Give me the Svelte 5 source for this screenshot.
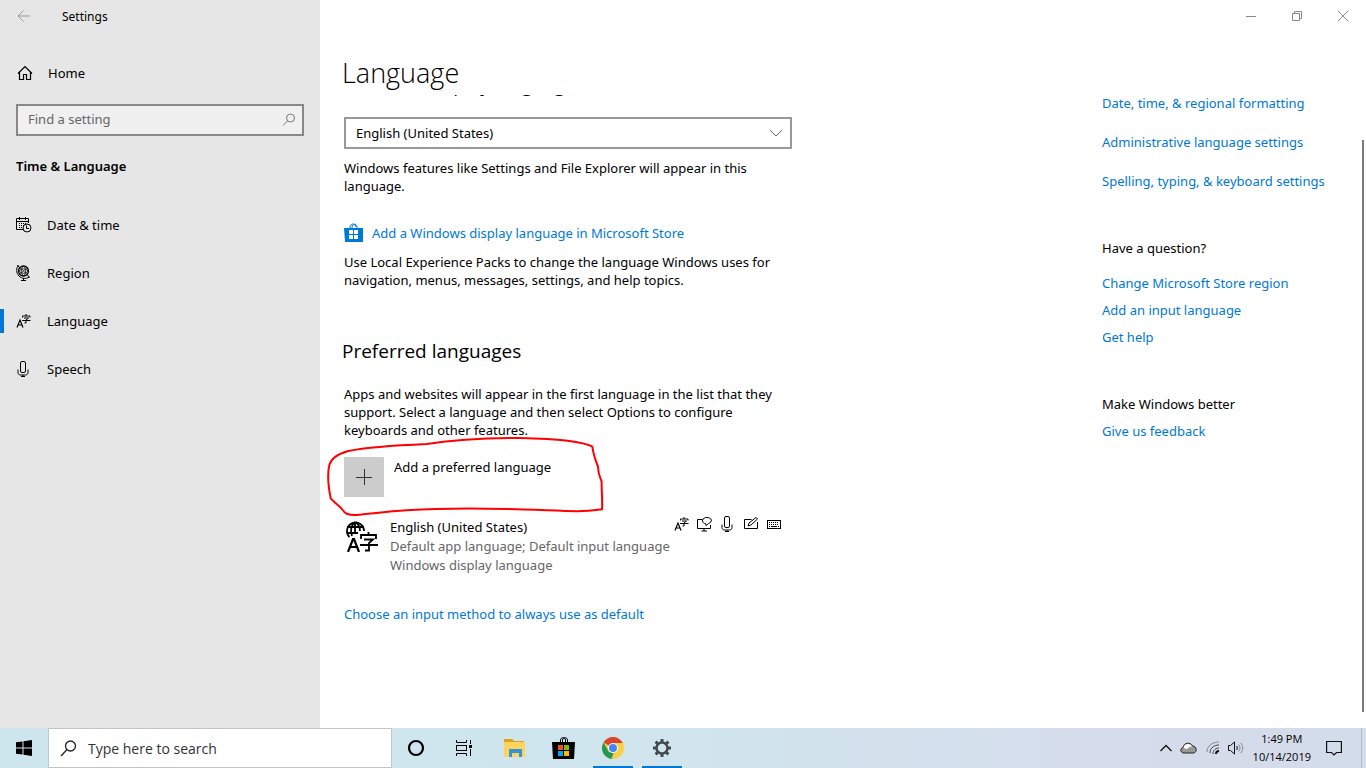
<!--
  Settings window: Time & Language > Language, with the desktop taskbar below it
-->

<script lang="ts">
  type NavItem = { id: string; label: string };

  const navItems: NavItem[] = [
    { id: "date", label: "Date & time" },
    { id: "region", label: "Region" },
    { id: "language", label: "Language" },
    { id: "speech", label: "Speech" },
  ];

  const relatedLinks = [
    "Date, time, & regional formatting",
    "Administrative language settings",
    "Spelling, typing, & keyboard settings",
  ];

  const helpLinks = ["Change Microsoft Store region", "Add an input language", "Get help"];

  const features = ["language", "tts", "speech", "handwriting", "keyboard"];

  const featureLabels: Record<string, string> = {
    language: "Display language",
    tts: "Text-to-speech",
    speech: "Speech recognition",
    handwriting: "Handwriting",
    keyboard: "Keyboard",
  };

  const apps = [
    { id: "cortana", label: "Cortana", open: false },
    { id: "taskview", label: "Task View", open: false },
    { id: "explorer", label: "File Explorer", open: false },
    { id: "store", label: "Microsoft Store", open: false },
    { id: "chrome", label: "Google Chrome", open: true },
    { id: "gear", label: "Settings", open: true },
  ];

  let current = $state("language");
  let query = $state("");
  let displayLanguage = $state("English (United States)");
</script>

{#snippet icon(name: string)}
  {#if name === "date"}
    <svg width="16" height="16" viewBox="0 0 16 16" fill="none" stroke="currentColor" aria-hidden="true">
      <path d="M7 12.5H.5v-11h12V6M.5 4.5h12M3.5 0v3M9.5 0v3" />
      <path d="M3 6.5h1M5 6.5h1M7 6.5h1M9 6.5h1M3 8.5h1M5 8.5h1M7 8.5h1M3 10.5h1M5 10.5h1" />
      <circle cx="11" cy="11" r="4" />
      <path d="M10.5 8.500v3h2.500" />
    </svg>
  {:else if name === "region"}
    <svg width="16" height="16" viewBox="0 0 16 16" fill="none" stroke="currentColor" aria-hidden="true">
      <circle cx="7.500" cy="6" r="5" stroke-width="1.300" />
      <path
        d="M4 2.500l7 7M11 2.500l-7 7M3 6c2-3 7-3 9 0M3 6c2 3 7 3 9 0M7.500 1c-3 3-3 7 0 10M7.500 1c3 3 3 7 0 10"
        stroke-width=".7"
      />
      <path d="M2.500 0C0 3 0 8 3 11s7 3 10.500 1M1.500.5l2 2M11.500 10l2 2.500M7.500 13v2M5 15.500h5" />
    </svg>
  {:else if name === "language"}
    <svg width="16" height="16" viewBox="0 0 16 16" fill="none" stroke="currentColor" aria-hidden="true">
      <path d="M1 14.500L4 7l3 7.500M2 12h4" stroke-width="1.200" />
      <path d="M10 1v2M6.500 4.500V3h7.500v1.500M8 5h4.500l-2.500 2v3H8.500M6 7.500h8.500" />
    </svg>
  {:else if name === "speech"}
    <svg width="16" height="16" viewBox="0 0 16 16" fill="none" stroke="currentColor" aria-hidden="true">
      <rect x="4.500" y=".5" width="5" height="11" rx="1.500" />
      <path d="M2 8.500v3c0 1.500 1 2.500 2.500 2.500h5c1.500 0 2.500-1 2.500-2.500v-3M7 14v2M5 15.500h4" />
    </svg>
  {:else if name === "tts"}
    <svg width="16" height="16" viewBox="0 0 16 16" fill="none" stroke="currentColor" aria-hidden="true">
      <path d="M5.500 3.500h-5v9h13V9M7 12.500V15M4.500 15h5.500" />
      <path d="M7.500 7.500C4 6 5 1.500 10 1.500s6 4.500 1.500 6L9 9.500V8z" />
    </svg>
  {:else if name === "handwriting"}
    <svg width="16" height="16" viewBox="0 0 16 16" fill="none" stroke="currentColor" aria-hidden="true">
      <path d="M8.500 3.500h-7v9h13V6M5 10l1-3 7-5.500 1.500 1.500L8 9z" />
    </svg>
  {:else if name === "keyboard"}
    <svg width="16" height="16" viewBox="0 0 16 16" fill="none" stroke="currentColor" aria-hidden="true">
      <rect x="1.500" y="4.500" width="13" height="8" />
      <path d="M3 6.500h10M3 8.500h10" stroke-dasharray="1 1" />
      <path d="M3 10.500h1M5 10.500h6M12 10.500h1" />
    </svg>
  {:else if name === "cortana"}
    <svg width="20" height="20" viewBox="0 0 20 20" fill="none" aria-hidden="true">
      <circle cx="9" cy="10" r="7" stroke="#000" stroke-width="2.200" />
    </svg>
  {:else if name === "taskview"}
    <svg width="20" height="20" viewBox="0 0 20 20" fill="none" stroke="#000" aria-hidden="true">
      <path d="M.5 2v2.500h10V2M.5 18v-2.500h10V18M14.500 2v4M14.500 11v7" />
      <rect x=".5" y="7.500" width="10" height="5" />
      <path d="M13 8.500h3" stroke-width="3" />
    </svg>
  {:else if name === "explorer"}
    <svg width="24" height="24" viewBox="0 0 24 24" aria-hidden="true">
      <path d="M1 3h8l2 2h10v4H1z" fill="#dca218" />
      <path d="M1 6h21v15H1z" fill="#ffd45e" />
      <path d="M6 13h13v8h-3v-4H9v4H6z" fill="#3694d4" />
    </svg>
  {:else if name === "store"}
    <svg width="24" height="24" viewBox="0 0 24 24" aria-hidden="true">
      <path d="M8.500 7V4c0-3 5-3 5 0v3M10.500 7V4c0-3 5-3 5 0v3" fill="none" stroke="#000" />
      <path d="M0 6h23l-1 17H1z" />
      <path d="M6 9h5v5H6z" fill="#f25022" />
      <path d="M12 9h5v5h-5z" fill="#7fba00" />
      <path d="M6 15h5v5H6z" fill="#00a4ef" />
      <path d="M12 15h5v5h-5z" fill="#ffb900" />
    </svg>
  {:else if name === "chrome"}
    <svg width="24" height="24" viewBox="0 0 24 24" aria-hidden="true">
      <circle cx="12" cy="12" r="11" fill="#f9cf48" />
      <path d="M12 12L2.500 6.500a11 11 0 0 1 19 0L22 7H12z" fill="#d94435" />
      <path d="M2.500 6.500L8 16l4.500 1-2 6A11 11 0 0 1 2.500 6.500z" fill="#239957" />
      <circle cx="12" cy="12" r="5" fill="#fff" />
      <circle cx="12" cy="12" r="4" fill="#4386ef" />
    </svg>
  {:else if name === "gear"}
    <svg width="20" height="20" viewBox="0 0 20 20" fill="none" stroke="#43484c" aria-hidden="true">
      <circle cx="10" cy="10" r="5.500" stroke-width="2.500" />
      <path
        d="M10 1v3M10 16v3M1 10h3M16 10h3M3.600 3.600l2.200 2.200M14.200 14.200l2.200 2.200M3.600 16.400l2.200-2.200M14.200 5.800l2.200-2.200"
        stroke-width="3"
      />
    </svg>
  {/if}
{/snippet}

<div class="desktop">
  <div class="window">
    <aside class="sidebar">
      <div class="app-bar">
        <button class="back" aria-label="Back">
          <svg width="14" height="12" viewBox="0 0 14 12" fill="none" stroke="#999" aria-hidden="true">
            <path d="M6.500.5L1 6l5.500 5.500M1 6h12" />
          </svg>
        </button>
        <span class="app-name">Settings</span>
      </div>

      <a class="home" href="#home">
        <svg width="16" height="16" viewBox="0 0 16 16" fill="none" stroke="#000" stroke-width="1.200" aria-hidden="true">
          <path d="M1 8.500L8 1.500l7 7M2.500 7.500v7h4v-5h3v5h4v-7" />
        </svg>
        Home
      </a>

      <div class="search">
        <input type="text" placeholder="Find a setting" aria-label="Find a setting" bind:value={query} />
        <svg width="14" height="14" viewBox="0 0 14 14" fill="none" stroke="#777" aria-hidden="true">
          <circle cx="8.500" cy="5" r="4" />
          <path d="M5.500 8L1 12.500" />
        </svg>
      </div>

      <h2 class="group">Time &amp; Language</h2>

      <nav>
        {#each navItems as item}
          <a
            href="#{item.id}"
            class="nav-item"
            class:active={current === item.id}
            onclick={() => (current = item.id)}
          >
            {@render icon(item.id)}
            {item.label}
          </a>
        {/each}
      </nav>
    </aside>

    <main>
      <div class="caption-buttons">
        <button aria-label="Minimize">
          <svg width="12" height="12" viewBox="0 0 12 12" fill="none" stroke="#888"><path d="M1 6.500h10" /></svg>
        </button>
        <button aria-label="Restore">
          <svg width="12" height="12" viewBox="0 0 12 12" fill="none" stroke="#888">
            <path d="M1.500 3.500h7v7h-7zM3.500 3.500v-2h7v7h-2" />
          </svg>
        </button>
        <button aria-label="Close">
          <svg width="12" height="12" viewBox="0 0 12 12" fill="none" stroke="#888"><path d="M1 1l10 10M11 1L1 11" /></svg>
        </button>
      </div>

      <h1>Language</h1>

      <div class="pane">
        <div class="content">
          <!-- Scrolled almost out of view under the page title -->
          <h2 class="scrolled">Windows display language</h2>

          <div class="combo">
            <select aria-label="Windows display language" bind:value={displayLanguage}>
              <option>English (United States)</option>
            </select>
            <svg width="14" height="8" viewBox="0 0 14 8" fill="none" stroke="#666" aria-hidden="true">
              <path d="M1 1l6 6 6-6" />
            </svg>
          </div>
          <p>Windows features like Settings and File Explorer will appear in this language.</p>

          <a class="store-link" href="#store">
            <svg width="20" height="20" viewBox="0 0 20 20" aria-hidden="true">
              <path d="M6 6V4c0-4 7-4 7 0v2M8 6V4c0-3 4-3 4 0" fill="none" stroke="#0078d7" />
              <path d="M0 5h19v14H1z" fill="#0078d7" />
              <path d="M5 7h4v4H5zM10 7h4v4h-4zM5 12h4v4H5zM10 12h4v4h-4z" fill="#fff" />
            </svg>
            Add a Windows display language in Microsoft Store
          </a>
          <p>
            Use Local Experience Packs to change the language Windows uses for navigation, menus,
            messages, settings, and help topics.
          </p>

          <h2 class="preferred">Preferred languages</h2>
          <p>
            Apps and websites will appear in the first language in the list that they support. Select a
            language and then select Options to configure keyboards and other features.
          </p>

          <div class="add-row">
            <button class="add">
              <span class="plus">
                <svg width="16" height="16" viewBox="0 0 16 16" fill="none" stroke="#333" aria-hidden="true">
                  <path d="M8.500 0v16M0 8.500h16" />
                </svg>
              </span>
              <span class="add-label">Add a preferred language</span>
            </button>
            <!-- Hand-drawn marker -->
            <svg class="marker" width="280" height="82" viewBox="18 18 840 246" aria-hidden="true">
              <path
                d="M320 42C250 45 150 50 85 63C50 73 32 90 28 105C22 130 25 170 32 205C45 220 60 228 68 240C75 250 80 255 110 255C150 252 200 244 260 241C350 235 450 234 560 237C640 239 720 243 770 244C810 243 830 240 846 238C848 210 844 180 845 155C840 140 835 135 834 110C828 95 820 75 817 50C790 35 700 26 600 24C500 24 400 30 320 42z"
              />
            </svg>
          </div>

          <div class="lang">
            <svg width="34" height="34" viewBox="0 0 34 34" fill="none" stroke="#000" stroke-width="1.800" aria-hidden="true">
              <path d="M5.500 19A8.500 8.500 0 1 1 20 13M3 9h17M3 15h11M8 18C6 13 7 7 11 4M11 4v12M12 4c3 3 4 5 4 9" />
              <path d="M4 34l5-13h1l5 13M6 29h8" stroke-width="2.200" />
              <path d="M24.500 14v3M17 21v-4h15v4M20 21.500h9L25 25v7.500h-4M16 27h18" />
            </svg>
            <div class="lang-text">
              <strong>English (United States)</strong>
              <span>Default app language; Default input language</span>
              <span>Windows display language</span>
            </div>
            <ul class="features">
              {#each features as feature}
                <li title={featureLabels[feature]}>{@render icon(feature)}</li>
              {/each}
            </ul>
          </div>

          <a class="default-input" href="#input">Choose an input method to always use as default</a>
        </div>

        <aside class="related">
          <div class="related-links">
            {#each relatedLinks as link}
              <a href="#related">{link}</a>
            {/each}
          </div>

          <h3>Have a question?</h3>
          <div class="help-links">
            {#each helpLinks as link}
              <a href="#help">{link}</a>
            {/each}
          </div>

          <h3>Make Windows better</h3>
          <a href="#feedback">Give us feedback</a>
        </aside>

        <div class="scrollbar"></div>
      </div>
    </main>
  </div>

  <footer class="taskbar">
    <button class="start" aria-label="Start">
      <svg width="16" height="16" viewBox="0 0 16 16" aria-hidden="true">
        <path d="M0 2.300L6.500 1.400V7.500H0zM7.500 1.200L16 0v7.500H7.500zM0 8.500h6.500v6.100L0 13.700zM7.500 8.500H16V16l-8.500-1.200z" />
      </svg>
    </button>
    <label class="task-search">
      <svg width="17" height="17" viewBox="0 0 17 17" fill="none" stroke="#222" stroke-width="1.300" aria-hidden="true">
        <circle cx="10.500" cy="6" r="5" />
        <path d="M7 9.500L1 16" />
      </svg>
      <input type="text" placeholder="Type here to search" aria-label="Type here to search" />
    </label>
    <div class="apps">
      {#each apps as app}
        <button class:open={app.open} aria-label={app.label}>{@render icon(app.id)}</button>
      {/each}
    </div>

    <div class="tray">
      <button aria-label="Show hidden icons">
        <svg width="12" height="8" viewBox="0 0 12 8" fill="none" stroke="#111" stroke-width="1.300"><path d="M.5 7L6 1.500 11.500 7" /></svg>
      </button>
      <button aria-label="OneDrive">
        <svg width="18" height="12" viewBox="0 0 18 12" fill="#fff" stroke="#222">
          <path d="M4 11C0 11 0 6 3 5.500 4 0 11 0 12.500 4c4 0 5.500 6 1 7z" fill="#999" />
          <path d="M3.500 5.500C4.500 1 11 1 12 4.500 9 4 8 7 6 7z" stroke="none" />
        </svg>
      </button>
      <button aria-label="Network">
        <svg width="14" height="14" viewBox="0 0 14 14" fill="none" stroke="#888">
          <path d="M1 11C1 5 6 1 13 1" />
          <path d="M4 12c0-5 4-8 9-8M7 13c0-4 3-6 6-6" stroke="#444" />
          <path d="M10 13c0-2 1-3 3-3" stroke="#111" stroke-width="2" />
        </svg>
      </button>
      <button aria-label="Volume">
        <svg width="17" height="14" viewBox="0 0 17 14" fill="none" stroke="#111">
          <path d="M.5 4.500h2L6.500 1v12l-4-3.500h-2zM8.500 5c1 1 1 3 0 4" />
          <path d="M10.500 3.500c2 2 2 5 0 7M12.500 2c3 3 3 7 0 10" stroke="#888" />
        </svg>
      </button>
      <button class="clock"><span>1:49 PM</span><span>10/14/2019</span></button>
      <button class="notify" aria-label="Notifications">
        <svg width="16" height="16" viewBox="0 0 16 16" fill="none" stroke="#111" stroke-width="1.200">
          <path d="M.6 1.500h14.800v11H10.500L8 15l-2.500-2.500H.6z" />
        </svg>
      </button>
      <button class="show-desktop" aria-label="Show desktop"></button>
    </div>
  </footer>
</div>

<style>
  :global(body) {
    margin: 0;
  }

  .desktop {
    display: flex;
    flex-direction: column;
    height: 100vh;
    font-family: "Noto Sans", "Segoe UI", "Open Sans", sans-serif;
    font-size: 13px;
    line-height: 18px;
    color: #000;
    background: #fff;
  }

  svg {
    flex: none;
    display: block;
  }

  button {
    border: none;
    background: none;
    padding: 0;
    font: inherit;
    color: inherit;
    display: flex;
    align-items: center;
    justify-content: center;
  }

  input,
  select {
    font: inherit;
    color: inherit;
    border: none;
    outline: none;
  }

  a {
    color: #0078d7;
    text-decoration: none;
  }

  p,
  h1,
  h2,
  h3 {
    margin: 0;
    font-weight: 400;
  }

  .window {
    flex: 1;
    min-height: 0;
    display: flex;
  }

  /* Sidebar */
  .sidebar {
    width: 320px;
    flex: none;
    background: #e6e6e6;
  }

  .app-bar {
    display: flex;
    align-items: center;
    height: 32px;
    font-size: 12px;
  }

  .app-name {
    padding-top: 2px;
  }

  .back {
    width: 48px;
    height: 32px;
    margin-right: 14px;
  }

  .home {
    display: flex;
    align-items: center;
    gap: 15px;
    height: 48px;
    margin-top: 17px;
    padding-left: 17px;
    color: #000;
  }

  .search {
    display: flex;
    align-items: center;
    height: 28px;
    margin: 7px 16px 0;
    padding: 0 6px 0 10px;
    border: 2px solid #888;
    background: #f0f0f0;
  }

  .search input {
    flex: 1;
    min-width: 0;
    padding: 0 0 2px;
    background: none;
  }

  .search input::placeholder {
    color: #666;
    opacity: 1;
  }

  .group {
    margin: 21px 16px 38px;
    font-size: 13px;
    font-weight: 600;
  }

  .nav-item {
    display: flex;
    align-items: center;
    gap: 15px;
    height: 24px;
    margin-bottom: 24px;
    padding-left: 12px;
    border-left: 4px solid transparent;
    color: #000;
  }

  .nav-item.active {
    border-left-color: #0078d7;
  }

  /* Main area */
  main {
    flex: 1;
    min-width: 0;
    display: flex;
    flex-direction: column;
  }

  .caption-buttons {
    display: flex;
    justify-content: flex-end;
    height: 32px;
  }

  .caption-buttons button {
    width: 46px;
  }

  h1 {
    margin-top: 23px;
    padding-left: 22px;
    font-family: "Open Sans", "Noto Sans", sans-serif;
    font-size: 27px;
    font-weight: 300;
    line-height: 36px;
  }

  .pane {
    flex: 1;
    min-height: 0;
    display: flex;
    margin-top: 4px;
    padding-left: 24px;
    overflow: hidden;
  }

  .content {
    width: 448px;
    margin-right: auto;
  }

  .content h2 {
    margin-left: -2px;
    font-family: "Open Sans", "Noto Sans", sans-serif;
    font-size: 19px;
    line-height: 24px;
  }

  .content .scrolled {
    margin-top: -22px;
  }

  .combo {
    position: relative;
    margin: 20px 0 10px;
  }

  .combo select {
    width: 100%;
    height: 32px;
    padding: 0 10px;
    border: 2px solid #999;
    border-radius: 0;
    background: #fff;
    appearance: none;
  }

  .combo svg {
    position: absolute;
    right: 9px;
    top: 12px;
    pointer-events: none;
  }

  .store-link {
    display: flex;
    align-items: center;
    gap: 8px;
    margin: 28px 0 10px;
  }

  .content .preferred {
    margin-top: 50px;
    margin-bottom: 22px;
  }

  .add-row {
    position: relative;
    margin-top: 18px;
  }

  .add {
    align-items: flex-start;
    gap: 10px;
  }

  .add-label {
    padding-top: 1px;
  }

  .plus {
    display: flex;
    align-items: center;
    justify-content: center;
    width: 40px;
    height: 40px;
    background: #ccc;
  }

  .marker {
    position: absolute;
    left: -18px;
    top: -21px;
    pointer-events: none;
    overflow: visible;
  }

  .marker path {
    fill: none;
    stroke: #f00;
    stroke-width: 6;
    stroke-linejoin: round;
  }

  .lang {
    display: flex;
    align-items: flex-start;
    margin-top: 21px;
  }

  .lang-text {
    display: flex;
    flex-direction: column;
    margin-left: 12px;
    line-height: 19px;
    color: #666;
    white-space: nowrap;
  }

  .lang-text strong {
    font-weight: 400;
    color: #000;
  }

  .features {
    display: flex;
    gap: 7px;
    margin: -2px 10px 0 auto;
    padding: 0;
    list-style: none;
  }

  .default-input {
    display: block;
    margin-top: 30px;
  }

  .related {
    width: 256px;
    flex: none;
    margin-top: -1px;
    white-space: nowrap;
  }

  .related-links,
  .help-links {
    display: flex;
    flex-direction: column;
    gap: 9px;
  }

  .related-links {
    gap: 21px;
  }

  .related h3 {
    margin: 49px 0 17px;
    font-size: 13px;
  }

  .help-links + h3 {
    margin-bottom: 9px;
  }

  .scrollbar {
    width: 2px;
    flex: none;
    margin: 45px 2px 16px 4px;
    background: #7a7a7a;
  }

  /* Taskbar */
  .taskbar {
    flex: none;
    display: flex;
    height: 40px;
    background: linear-gradient(to right, #cde6ee, #d0e5ee 50%, #d5dceb 80%, #d3dcea);
  }

  .start {
    width: 48px;
  }

  .task-search {
    display: flex;
    align-items: center;
    gap: 11px;
    width: 331px;
    padding-left: 11px;
    border: 1px solid #c4c4c4;
    background: #fff;
    font-family: "Open Sans", "Noto Sans", sans-serif;
    font-size: 14px;
  }

  .task-search input {
    flex: 1;
    padding: 2px 0 0;
    background: none;
  }

  .task-search input::placeholder {
    color: #333;
    opacity: 1;
  }

  .apps {
    display: flex;
    gap: 9px;
    margin-left: 5px;
  }

  .apps button {
    width: 40px;
    border-bottom: 2px solid transparent;
    border-top: 2px solid transparent;
  }

  .apps .open {
    border-bottom-color: #0078d7;
  }

  .tray {
    display: flex;
    align-items: center;
    gap: 8px;
    margin-left: auto;
  }

  .clock {
    flex-direction: column;
    font-family: "Open Sans", "Noto Sans", sans-serif;
    font-size: 11px;
  }

  .notify {
    width: 30px;
    margin-right: 4px;
  }

  .show-desktop {
    width: 5px;
    height: 40px;
    border-left: 1px solid #b4bcc8;
  }
</style>
